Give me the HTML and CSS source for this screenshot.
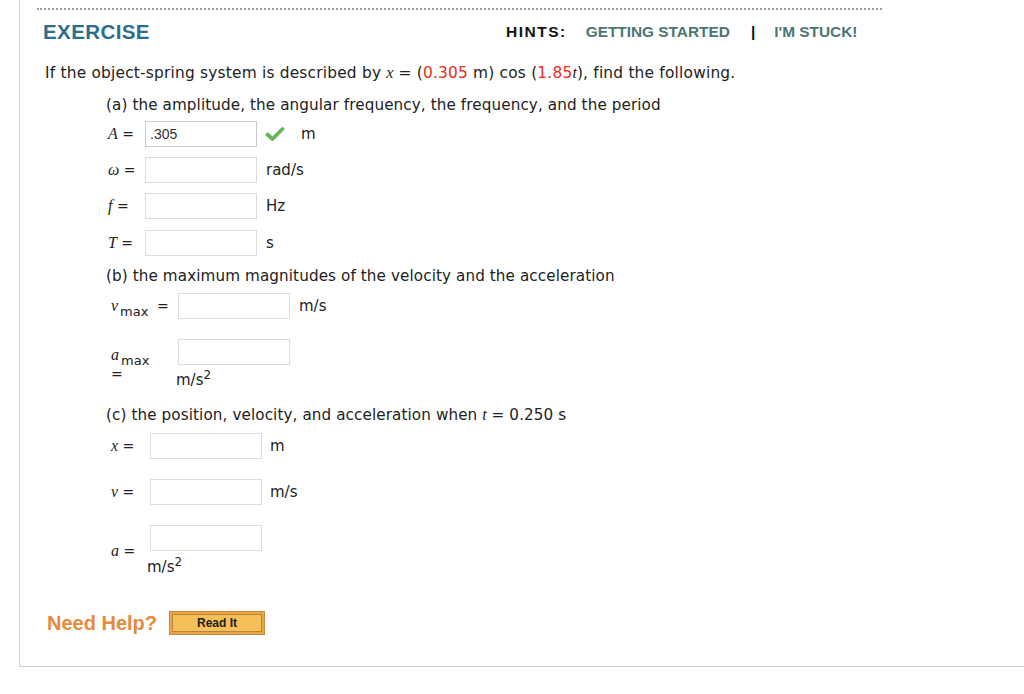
FILE: index.html
```html
<!DOCTYPE html>
<html>
<head>
<meta charset="utf-8">
<link rel="stylesheet" href="styles.css">
</head>
<body>
<div class="panel">
  <div class="rule"></div>
  <div class="head">
    <div class="title">EXERCISE</div>
    <div class="hints">
      <span class="hints-label">HINTS:</span>
      <span class="hint-link">GETTING STARTED</span>
      <span class="sep">|</span>
      <span class="hint-link">I'M STUCK!</span>
    </div>
  </div>

  <p class="statement">If the object-spring system is described by <i class="var">x</i> = (<span class="red">0.305</span> m) cos (<span class="red">1.85</span><i class="var">t</i>), find the following.</p>

  <p class="part part-a">(a) the amplitude, the angular frequency, the frequency, and the period</p>
  <div class="row row-a1">
    <div class="lbl lbl-a"><i class="var">A</i> =</div>
    <input class="ans ans-ok" type="text" value=".305" readonly>
    <svg class="check" width="20" height="16" viewBox="0 0 20 16"><path d="M2.5 8.5 L7.5 13 L17.5 3" fill="none" stroke="#6bb35b" stroke-width="3.8" stroke-linecap="round" stroke-linejoin="round"/></svg>
    <span class="unit unit-check">m</span>
  </div>
  <div class="row row-a2">
    <div class="lbl lbl-a"><i class="var">ω</i> =</div>
    <input class="ans" type="text" readonly>
    <span class="unit">rad/s</span>
  </div>
  <div class="row row-a2">
    <div class="lbl lbl-a"><i class="var">f</i> =</div>
    <input class="ans" type="text" readonly>
    <span class="unit">Hz</span>
  </div>
  <div class="row row-a4">
    <div class="lbl lbl-a"><i class="var">T</i> =</div>
    <input class="ans" type="text" readonly>
    <span class="unit">s</span>
  </div>

  <p class="part part-b">(b) the maximum magnitudes of the velocity and the acceleration</p>
  <div class="row row-b1">
    <div class="lbl lbl-b"><i class="var">v</i><sub class="sub">max</sub> =</div>
    <input class="ans" type="text" readonly>
    <span class="unit">m/s</span>
  </div>
  <div class="row row-b2">
    <div class="lbl lbl-b lbl-stack">
      <div><i class="var">a</i><sub class="sub">max</sub></div>
      <div>=</div>
    </div>
    <div class="cell-stack">
      <input class="ans" type="text" readonly>
      <span class="unit-below unit-below-b">m/s<sup>2</sup></span>
    </div>
  </div>

  <p class="part part-c">(c) the position, velocity, and acceleration when <i class="var">t</i> = 0.250 s</p>
  <div class="row row-c1">
    <div class="lbl lbl-c"><i class="var">x</i> =</div>
    <input class="ans" type="text" readonly>
    <span class="unit unit-c">m</span>
  </div>
  <div class="row row-c2">
    <div class="lbl lbl-c"><i class="var">v</i> =</div>
    <input class="ans" type="text" readonly>
    <span class="unit unit-c">m/s</span>
  </div>
  <div class="row row-c2">
    <div class="lbl lbl-c"><i class="var">a</i> =</div>
    <div class="cell-stack">
      <input class="ans" type="text" readonly>
      <span class="unit-below unit-below-c">m/s<sup>2</sup></span>
    </div>
  </div>

  <div class="help">
    <span class="help-text">Need Help?</span>
    <span class="read-btn"><span class="read-inner">Read It</span></span>
  </div>
</div>
</body>
</html>
```

FILE: styles.css
```css
* { box-sizing: border-box; }
html, body { margin: 0; padding: 0; background: #fff; }
body {
  font-family: "DejaVu Sans", Verdana, sans-serif;
  font-size: 15px;
  color: #222;
  overflow: hidden;
}
.panel {
  margin-left: 19px;
  width: calc(100% - 19px);
  height: 667px;
  padding-top: 8px;
  border-left: 1px solid #cfcfcf;
  border-bottom: 1px solid #cfcfcf;
}
.rule {
  margin-left: 17px;
  width: 845px;
  height: 0;
  border-top: 2px dotted #9a9a9a;
}
.head {
  display: flex;
  align-items: center;
  height: 24px;
  margin-top: 10px;
  font-family: "Liberation Sans", Arial, sans-serif;
  font-weight: bold;
}
.title {
  width: 486px;
  padding-left: 23px;
  font-size: 20.5px;
  letter-spacing: 0.4px;
  color: #2d6e8e;
}
.hints {
  display: flex;
  align-items: center;
  font-size: 15.4px;
}
.hints-label {
  color: #111;
  font-size: 15.5px;
  letter-spacing: 1.5px;
}
.hint-link { color: #4a7673; }
.hints-label + .hint-link { margin-left: 19px; }
.sep { color: #111; margin: 0 19px 0 21px; }
.statement {
  margin: 20px 0 0 25px;
  line-height: 18px;
  font-size: 15.4px;
  letter-spacing: 0.2px;
}
.var {
  font-family: "Liberation Serif", "Times New Roman", serif;
  font-style: italic;
  font-size: 16px;
  letter-spacing: 0;
}
.red { color: #ee2b20; }
.part {
  margin: 0 0 0 86px;
  line-height: 18px;
  font-size: 15.2px;
  letter-spacing: 0.1px;
}
.part-a { margin-top: 14px; }
.part-b { margin-top: 11px; }
.part-c { margin-top: 17px; }
.row {
  display: flex;
  align-items: center;
  margin-left: 88px;
}
.row-a1 { margin-top: 7px; }
.row-a2 { margin-top: 10px; }
.row-a4 { margin-top: 11px; }
.row-b1 { margin-top: 8px; }
.row-b2 { margin-top: 20px; }
.row-c1 { margin-top: 9px; }
.row-c2 { margin-top: 20px; }
.lbl {
  font-size: 14px;
  line-height: 19px;
  color: #222;
  white-space: nowrap;
}
.lbl-a { width: 37px; }
.lbl-b { width: 70px; padding-left: 3px; }
.lbl-c { width: 42px; padding-left: 3px; }
.lbl-stack { display: flex; flex-direction: column; }
.sub {
  font-size: 13px;
  vertical-align: -5px;
  margin-left: 2px;
  margin-right: 4px;
  line-height: 0;
}
.ans {
  display: block;
  width: 112px;
  height: 26px;
  margin: 0;
  padding: 0 4px;
  border: 1px solid #dcdcdc;
  border-radius: 0;
  background: #fff;
  font-family: "Liberation Sans", Arial, sans-serif;
  font-size: 14px;
  color: #333;
  outline: none;
}
.ans-ok { border-color: #cccccc; }
.check { margin-left: 8px; display: block; }
.unit {
  margin-left: 9px;
  line-height: 18px;
  color: #222;
}
.unit-check { margin-left: 16px; }
.unit-c { margin-left: 8px; }
.cell-stack { display: flex; flex-direction: column; }
.unit-below { line-height: 18px; color: #222; }
.unit-below-b { margin-top: 6px; margin-left: -2px; }
.unit-below-c { margin-top: 7px; margin-left: -3px; }
sup { font-size: 12px; vertical-align: 6px; line-height: 0; }
.help {
  display: flex;
  align-items: center;
  margin: 35px 0 0 27px;
  height: 24px;
}
.help-text {
  font-family: "Liberation Sans", Arial, sans-serif;
  font-weight: bold;
  font-size: 20px;
  color: #e68b3a;
}
.read-btn {
  display: block;
  margin-left: 12px;
  width: 96px;
  height: 24px;
  padding: 2px;
  background: #eea54a;
  border: 1px solid #c98b3c;
}
.read-inner {
  display: flex;
  align-items: center;
  justify-content: center;
  height: 100%;
  background: #f5bf5a;
  border: 1px solid #b9843e;
  font-family: "Liberation Sans", Arial, sans-serif;
  font-weight: bold;
  font-size: 12px;
  color: #1d1d1d;
}
```
